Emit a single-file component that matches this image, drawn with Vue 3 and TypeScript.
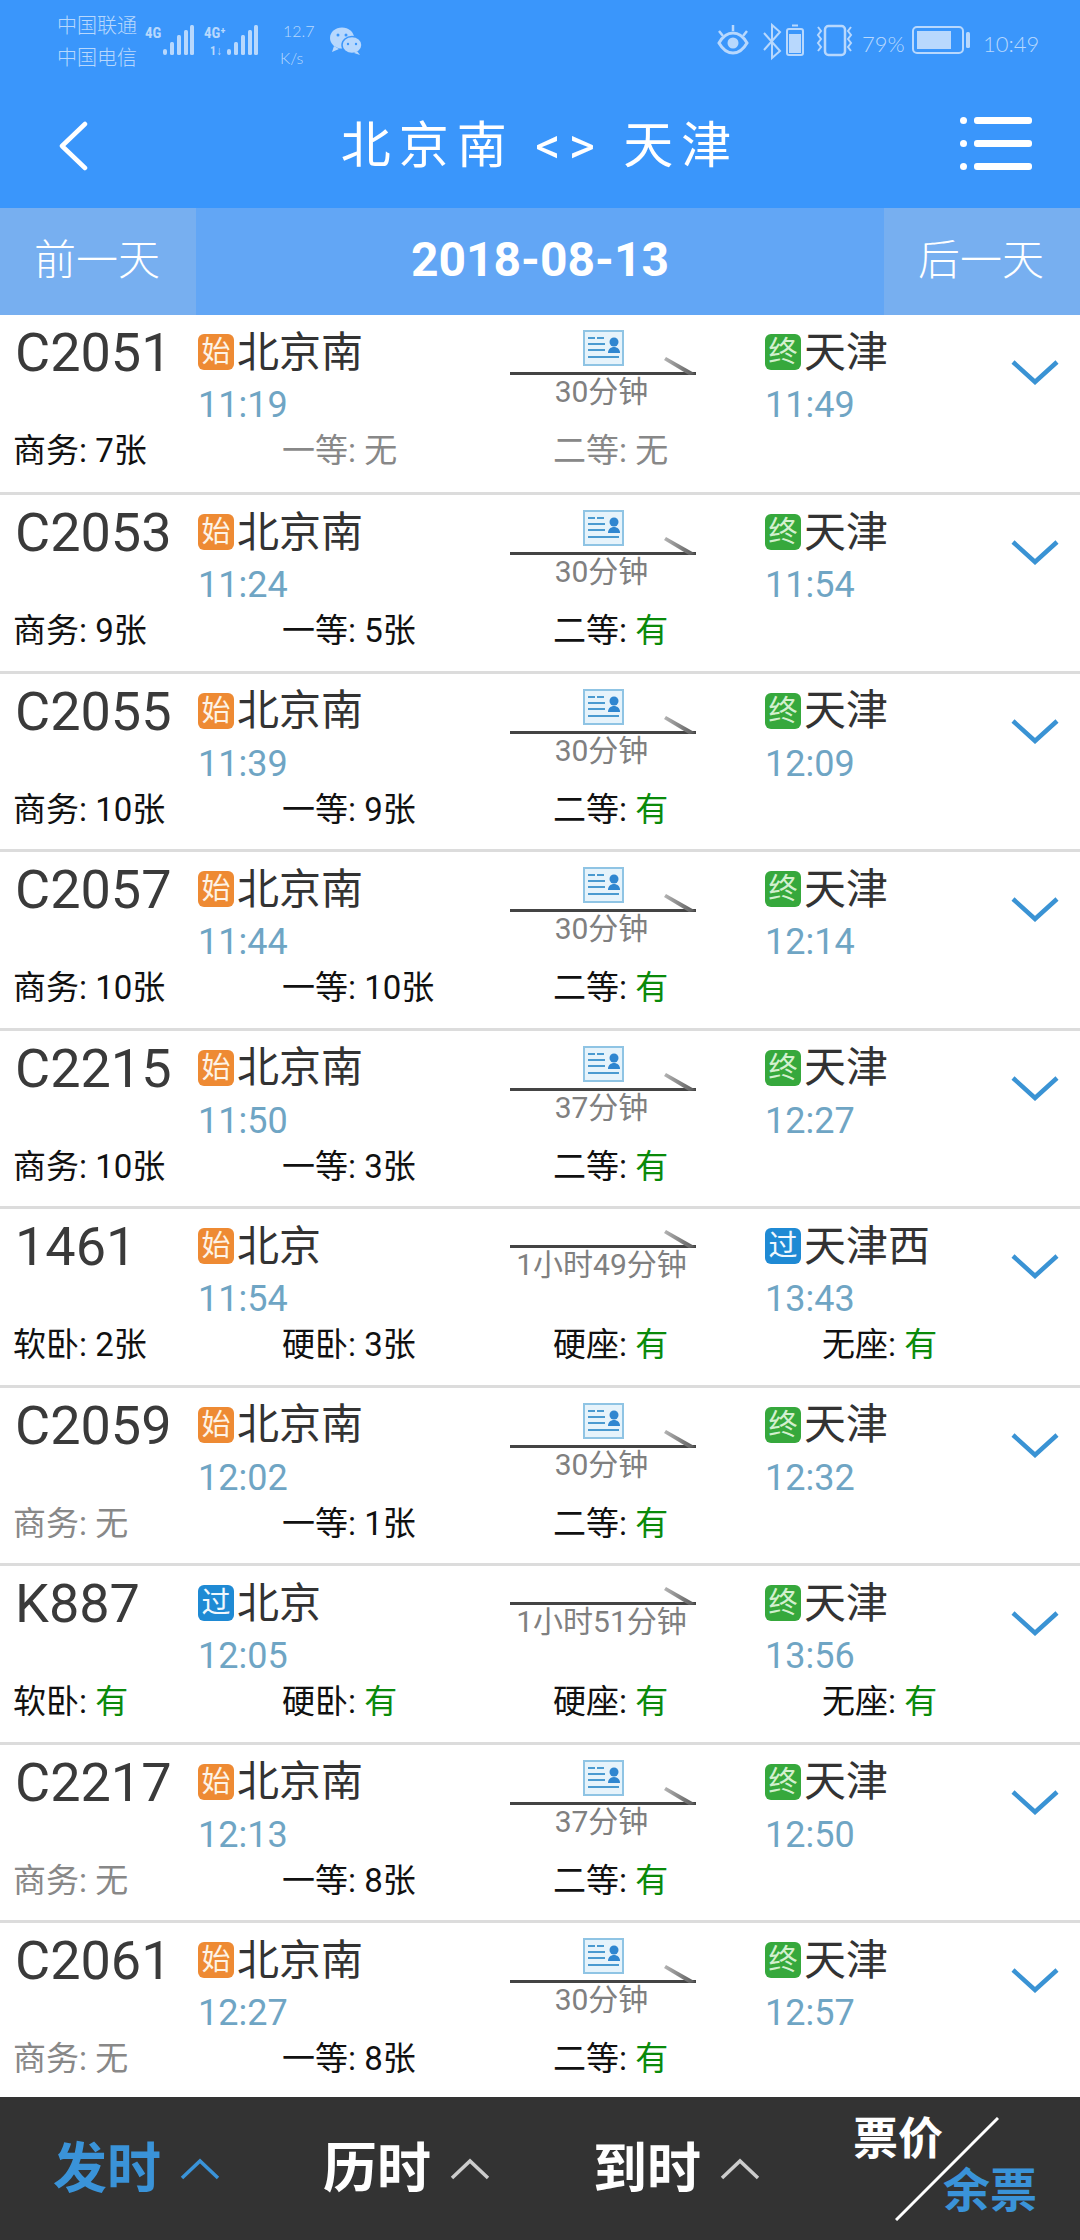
<script setup lang="ts">
type Seat = { label: string; value: string };
type Stop = { kind: "start" | "end" | "pass"; name: string; time: string };
type Train = {
  code: string;
  from: Stop;
  to: Stop;
  duration: string;
  seats: Seat[];
};

const badgeText = { start: "始", end: "终", pass: "过" };

function hsr(
  code: string,
  dep: string,
  arr: string,
  duration: string,
  first: string,
  second: string,
  third: string,
): Train {
  return {
    code,
    from: { kind: "start", name: "北京南", time: dep },
    to: { kind: "end", name: "天津", time: arr },
    duration,
    seats: [
      { label: "商务", value: first },
      { label: "一等", value: second },
      { label: "二等", value: third },
    ],
  };
}

const trains: Train[] = [
  hsr("C2051", "11:19", "11:49", "30分钟", "7张", "无", "无"),
  hsr("C2053", "11:24", "11:54", "30分钟", "9张", "5张", "有"),
  hsr("C2055", "11:39", "12:09", "30分钟", "10张", "9张", "有"),
  hsr("C2057", "11:44", "12:14", "30分钟", "10张", "10张", "有"),
  hsr("C2215", "11:50", "12:27", "37分钟", "10张", "3张", "有"),
  {
    code: "1461",
    from: { kind: "start", name: "北京", time: "11:54" },
    to: { kind: "pass", name: "天津西", time: "13:43" },
    duration: "1小时49分钟",
    seats: [
      { label: "软卧", value: "2张" },
      { label: "硬卧", value: "3张" },
      { label: "硬座", value: "有" },
      { label: "无座", value: "有" },
    ],
  },
  hsr("C2059", "12:02", "12:32", "30分钟", "无", "1张", "有"),
  {
    code: "K887",
    from: { kind: "pass", name: "北京", time: "12:05" },
    to: { kind: "end", name: "天津", time: "13:56" },
    duration: "1小时51分钟",
    seats: [
      { label: "软卧", value: "有" },
      { label: "硬卧", value: "有" },
      { label: "硬座", value: "有" },
      { label: "无座", value: "有" },
    ],
  },
  hsr("C2217", "12:13", "12:50", "37分钟", "无", "8张", "有"),
  hsr("C2061", "12:27", "12:57", "30分钟", "无", "8张", "有"),
];

const sorts = [
  { label: "发时", active: true },
  { label: "历时", active: false },
  { label: "到时", active: false },
];

const isLong = (train: Train) => train.duration.includes("小时");
</script>

<template>
  <div class="page">
    <header class="top">
      <div class="status">
        <div class="carriers">
          <span>中国联通</span>
          <span>中国电信</span>
        </div>
        <svg class="status-left" viewBox="140 0 230 84" width="230" height="84">
          <text x="145" y="38" class="net">4G</text>
          <g class="fill">
            <rect x="163" y="49" width="4" height="6" rx="2" />
            <rect x="170" y="42" width="4" height="13" rx="1.5" />
            <rect x="177" y="35" width="4" height="20" rx="1.5" />
            <rect x="184" y="30" width="4" height="25" rx="1.5" />
            <rect x="190" y="25" width="4" height="30" rx="1.5" />
          </g>
          <text x="204" y="38" class="net">4G⁺</text>
          <text x="210" y="55" class="net small">1↓</text>
          <g class="fill">
            <rect x="227" y="49" width="4" height="6" rx="2" />
            <rect x="234" y="42" width="4" height="13" rx="1.5" />
            <rect x="241" y="35" width="4" height="20" rx="1.5" />
            <rect x="248" y="30" width="4" height="25" rx="1.5" />
            <rect x="254" y="25" width="4" height="30" rx="1.5" />
          </g>
          <text x="283" y="37" class="speed">12.7</text>
          <text x="280" y="64" class="speed">K/s</text>
          <g class="fill">
            <ellipse cx="342" cy="38" rx="12" ry="10.5" />
            <path d="M334 46l-2 6 7-3z" />
            <ellipse cx="352" cy="45" rx="10" ry="8.5" stroke="#3a96fb" stroke-width="1.5" />
            <path d="M357 51l3 4-6-2z" />
          </g>
          <g fill="#3a96fb">
            <circle cx="338" cy="35" r="1.5" />
            <circle cx="346" cy="35" r="1.5" />
            <circle cx="348" cy="44" r="1.2" />
            <circle cx="356" cy="44" r="1.2" />
          </g>
        </svg>
        <svg class="status-right" viewBox="710 0 330 84" width="330" height="84">
          <g class="line-icon">
            <path d="M719 43c4-7 9-10 14-10s10 3 14 10c-4 7-9 10-14 10s-10-3-14-10z" stroke-width="3" />
            <path d="M719 31l4 5M733 25v6M747 31l-4 5" stroke-width="2.5" />
          </g>
          <circle cx="733" cy="43" r="5.5" class="fill" />
          <g class="line-icon" stroke-width="2">
            <path d="M764 33l16 18-8 7V25l8 7-16 18" />
            <rect x="787" y="29" width="16" height="26" rx="2" />
            <path d="M792 25.500h6" />
            <rect x="825" y="26" width="20" height="29" rx="3.500" stroke-width="2.500" />
            <path d="M818 27l3 4-3 4 3 4-3 4 3 4-3 4M851 27l-3 4 3 4-3 4 3 4-3 4 3 4" />
            <rect x="913" y="27" width="50" height="26" rx="4" />
          </g>
          <rect x="789" y="34" width="12" height="19" class="fill" />
          <rect x="917" y="31" width="34" height="18" class="fill" />
          <rect x="966" y="32" width="4" height="16" rx="1.500" class="fill" />
          <text x="862" y="52" class="clock">79%</text>
          <text x="983" y="52" class="clock">10:49</text>
        </svg>
      </div>
      <div class="nav">
        <svg class="back" viewBox="0 0 30 50" width="30" height="50">
          <path d="M27 3L4 25l23 22" fill="none" stroke="#fff" stroke-width="4.500" stroke-linecap="round" stroke-linejoin="round" />
        </svg>
        <h1 class="title">北京南 &lt;&gt; 天津</h1>
        <div class="menu">
          <div v-for="n in 3" :key="n" class="menu-row">
            <i class="menu-dot"></i>
            <i class="menu-bar"></i>
          </div>
        </div>
      </div>
    </header>

    <div class="date-bar">
      <div class="day-btn">前一天</div>
      <div class="date">2018-08-13</div>
      <div class="day-btn">后一天</div>
    </div>

    <main class="list">
      <section v-for="(train, i) in trains" :key="train.code" class="row">
        <div class="main">
          <div class="code">{{ train.code }}</div>
          <div class="stop">
            <div class="stop-name">
              <span class="badge" :class="train.from.kind">{{ badgeText[train.from.kind] }}</span>
              {{ train.from.name }}
            </div>
            <div class="time">{{ train.from.time }}</div>
          </div>
          <div class="route" :class="{ long: isLong(train) }">
            <svg v-if="!isLong(train)" class="ticket" viewBox="0 0 41 36" width="41" height="36">
              <rect x="1" y="1" width="39" height="34" fill="#e6f3fb" stroke="#8fc4e4" stroke-width="2" />
              <path d="M5 8h7M14 8h7M5 14h17M5 20h17M5 27h31" stroke="#4a9ad0" stroke-width="1.800" />
              <circle cx="31" cy="12" r="4.500" fill="#2f86d0" />
              <path d="M25 23c0-4 3-6 6-6s6 2 6 6z" fill="#2f86d0" />
            </svg>
            <div class="rail">
              <svg class="barb" viewBox="0 0 32 18" width="32" height="18">
                <defs>
                  <linearGradient :id="`barb-${i}`" x1="0" y1="0" x2="1" y2="0">
                    <stop offset="0" stop-color="#b4b4b4" />
                    <stop offset="1" stop-color="#555" />
                  </linearGradient>
                </defs>
                <path d="M2 0L32 17L25 18L0 3z" :fill="`url(#barb-${i})`" />
              </svg>
            </div>
            <div class="duration">{{ train.duration }}</div>
          </div>
          <div class="stop">
            <div class="stop-name">
              <span class="badge" :class="train.to.kind">{{ badgeText[train.to.kind] }}</span>
              {{ train.to.name }}
            </div>
            <div class="time">{{ train.to.time }}</div>
          </div>
          <svg class="chevron" viewBox="0 0 48 26" width="48" height="26">
            <path d="M2 3l22 20L46 3" fill="none" stroke="#3a93d4" stroke-width="4.500" />
          </svg>
        </div>
        <div class="seats">
          <div v-for="seat in train.seats" :key="seat.label" class="seat" :class="{ none: seat.value === '无' }">
            {{ seat.label }}:
            <span :class="{ has: seat.value === '有' }">{{ seat.value }}</span>
          </div>
        </div>
      </section>
    </main>

    <footer class="sort-bar">
      <div v-for="sort in sorts" :key="sort.label" class="sort" :class="{ active: sort.active }">
        <span class="sort-label">{{ sort.label }}</span>
        <svg viewBox="0 0 40 22" width="40" height="22">
          <path d="M2 20L20 3l18 17" fill="none" stroke="currentColor" stroke-width="3.500" />
        </svg>
      </div>
      <div class="price">
        <span class="price-top">票价</span>
        <span class="price-bottom">余票</span>
        <svg class="slash" viewBox="0 0 104 104" width="104" height="104">
          <path d="M1 103L103 1" stroke="#fff" stroke-width="3" />
        </svg>
      </div>
    </footer>
  </div>
</template>

<style scoped>
.page {
  display: flex;
  flex-direction: column;
  width: 1080px;
  height: 2240px;
  overflow: hidden;
  background: #fff;
  font-family: Roboto, "Noto Sans CJK SC", sans-serif;
}

.top {
  background: #3a96fb;
  height: 208px;
}

.status {
  display: flex;
  align-items: center;
  height: 84px;
  padding-left: 57px;
  color: #b8d8fd;
}

.carriers {
  display: flex;
  flex-direction: column;
  width: 83px;
  font-size: 20px;
  line-height: 32px;
  font-weight: 300;
  white-space: nowrap;
}

.status-right {
  margin-left: 340px;
}

.fill {
  fill: #b8d8fd;
}

.line-icon {
  fill: none;
  stroke: #b8d8fd;
}

.net {
  font: 700 15px "Roboto Condensed", Roboto, sans-serif;
  fill: #b8d8fd;
}

.net.small {
  font-size: 12px;
}

.speed {
  font: 300 16px Lato, sans-serif;
  fill: #b8d8fd;
}

.clock {
  font: 300 22px Lato, sans-serif;
  fill: #b8d8fd;
}

.nav {
  display: flex;
  align-items: center;
  height: 124px;
  padding: 0 48px 0 58px;
}

.back {
  flex: none;
}

.title {
  flex: 1;
  margin: 0;
  text-align: center;
  color: #fff;
  font-size: 50px;
  font-weight: 400;
  letter-spacing: 8px;
  line-height: 1;
  padding-left: 32px;
  white-space: nowrap;
}

.menu {
  display: flex;
  flex-direction: column;
  gap: 16px;
  flex: none;
  width: 72px;
  margin-top: -6px;
}

.menu-row {
  display: flex;
  align-items: center;
  gap: 7px;
}

.menu-dot {
  width: 7px;
  height: 7px;
  border-radius: 50%;
  background: #fff;
}

.menu-bar {
  flex: 1;
  height: 7px;
  border-radius: 3px;
  background: #fff;
}

.date-bar {
  display: flex;
  height: 107px;
  background: #62a6f5;
  color: #fff;
}

.day-btn {
  display: flex;
  align-items: center;
  justify-content: center;
  box-sizing: border-box;
  width: 196px;
  padding: 0 2px 11px 0;
  background: #77aff0;
  font-size: 42px;
  font-weight: 300;
}

.date {
  flex: 1;
  align-self: center;
  margin-top: -5px;
  text-align: center;
  font-size: 48px;
  font-weight: 700;
}

.list {
  flex: 1;
  min-height: 0;
  overflow: hidden;
}

.row {
  box-sizing: border-box;
  height: 178.5px;
  border-bottom: 3px solid #dcdcdc;
}

.row:first-child {
  height: 180px;
}

.main {
  display: grid;
  grid-template-columns: 198px 312px 255px 1fr 48px;
  height: 115px;
  padding-right: 21px;
}

.code {
  padding: 8px 0 0 15px;
  font-size: 54px;
  line-height: 60px;
  color: #3a3a3a;
}

.stop {
  padding-top: 11px;
}

.stop-name {
  display: flex;
  align-items: center;
  gap: 3px;
  height: 44px;
  font-size: 42px;
  color: #333;
  white-space: nowrap;
}

.badge {
  flex: none;
  width: 36px;
  height: 36px;
  margin-top: 8px;
  border-radius: 6px;
  font-size: 29px;
  line-height: 36px;
  text-align: center;
  color: #fdf3e6;
}

.badge.start {
  background: #ee8a33;
}

.badge.end {
  background: #36a83c;
  color: #d3f0cf;
}

.badge.pass {
  background: #1f8ad4;
  color: #f0f8fe;
}

.time {
  margin-top: 15px;
  font-size: 36px;
  line-height: 40px;
  color: #6fa5c4;
}

.route {
  display: flex;
  flex-direction: column;
  align-items: center;
  width: 186px;
  padding-top: 15px;
}

.route.long {
  padding-top: 36px;
}

.ticket {
  flex: none;
  margin-bottom: 6px;
}

.rail {
  position: relative;
  width: 100%;
  height: 3px;
  background: #444;
}

.barb {
  position: absolute;
  right: 0;
  bottom: 0;
}

.duration {
  margin: 0 3px 0 0;
  font-size: 30px;
  line-height: 34px;
  color: #808080;
  white-space: nowrap;
}

.chevron {
  margin-top: 44px;
}

.seats {
  display: grid;
  grid-template-columns: 269px 271px 269px 1fr;
  padding: 1px 0 0 13px;
}

.seat {
  font-size: 33px;
  line-height: 40px;
  color: #111;
  white-space: nowrap;
}

.seat.none {
  color: #888;
}

.has {
  color: #0a8a0a;
}

.sort-bar {
  display: flex;
  flex: none;
  height: 143px;
  padding-left: 53px;
  background: #333;
}

.sort {
  display: flex;
  align-items: center;
  width: 270px;
  gap: 19px;
  color: #ccc;
}

.sort-label {
  margin-top: -9px;
  font-size: 54px;
  font-weight: 700;
  color: #fff;
}

.sort.active,
.sort.active .sort-label {
  color: #3a93d8;
}

.price {
  position: relative;
  display: flex;
  flex-direction: column;
  font-weight: 700;
  font-size: 45px;
  line-height: 50px;
  padding-top: 18px;
  margin-left: -10px;
}

.price-top {
  color: #fff;
}

.price-bottom {
  margin: 1px 0 0 90px;
  font-size: 47px;
  color: #3a93d8;
  white-space: nowrap;
}

.slash {
  position: absolute;
  left: 42px;
  top: 20px;
}
</style>
